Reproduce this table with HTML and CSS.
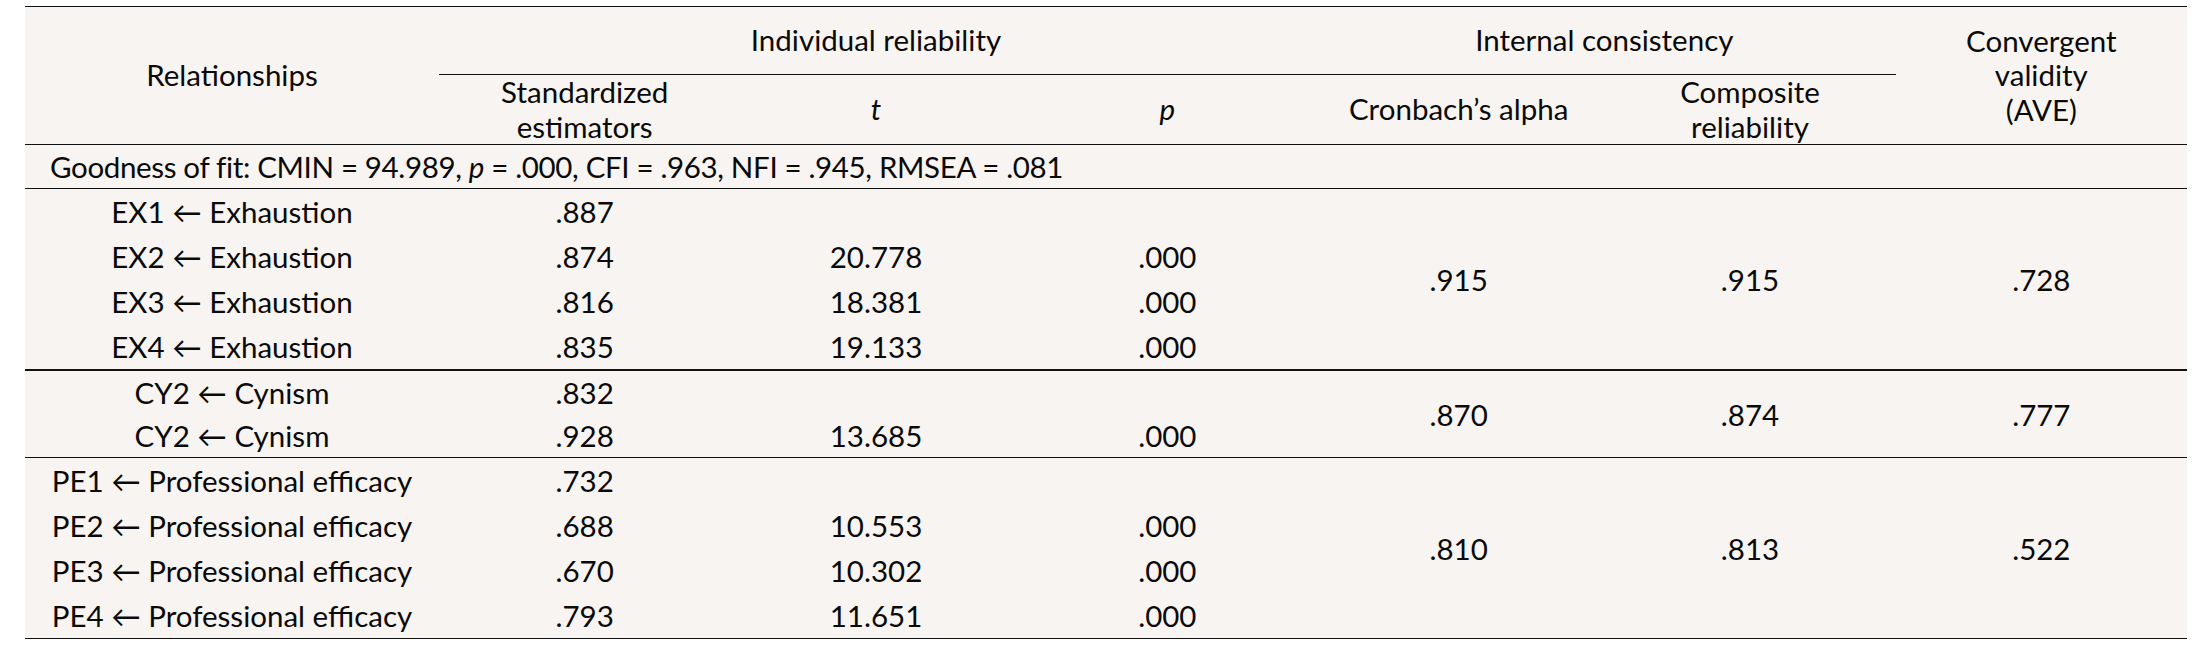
FILE: index.html
```html
<!DOCTYPE html>
<html lang="en">
<head>
<meta charset="utf-8">
<title>Reliability table</title>
<link rel="stylesheet" href="styles.css">
</head>
<body>
<table class="tbl">
  <colgroup>
    <col class="c-rel">
    <col class="c-num"><col class="c-num"><col class="c-num">
    <col class="c-num"><col class="c-num"><col class="c-num">
  </colgroup>
  <thead>
    <tr class="h1">
      <th rowspan="2" class="span2">Relationships</th>
      <th colspan="3" class="grp">Individual reliability</th>
      <th colspan="2" class="grp">Internal consistency</th>
      <th rowspan="2" class="span2">Convergent<br>validity<br>(AVE)</th>
    </tr>
    <tr class="h2">
      <th>Standardized<br>estimators</th>
      <th><i>t</i></th>
      <th><i>p</i></th>
      <th>Cronbach’s alpha</th>
      <th>Composite<br>reliability</th>
    </tr>
  </thead>
  <tbody>
    <tr class="fit">
      <td colspan="7" class="fit-cell">Goodness of fit: CMIN = 94.989, <i>p</i> = .000, CFI = .963, NFI = .945, RMSEA = .081</td>
    </tr>
  </tbody>
  <tbody class="grp-ex">
    <tr class="row">
      <td>EX1 ← Exhaustion</td><td>.887</td><td></td><td></td>
      <td rowspan="4" class="end">.915</td><td rowspan="4" class="end">.915</td><td rowspan="4" class="end">.728</td>
    </tr>
    <tr class="row"><td>EX2 ← Exhaustion</td><td>.874</td><td>20.778</td><td>.000</td></tr>
    <tr class="row"><td>EX3 ← Exhaustion</td><td>.816</td><td>18.381</td><td>.000</td></tr>
    <tr class="row last"><td>EX4 ← Exhaustion</td><td>.835</td><td>19.133</td><td>.000</td></tr>
  </tbody>
  <tbody class="grp-cy">
    <tr class="row cy">
      <td>CY2 ← Cynism</td><td>.832</td><td></td><td></td>
      <td rowspan="2" class="end">.870</td><td rowspan="2" class="end">.874</td><td rowspan="2" class="end">.777</td>
    </tr>
    <tr class="row cy last"><td>CY2 ← Cynism</td><td>.928</td><td>13.685</td><td>.000</td></tr>
  </tbody>
  <tbody class="grp-pe">
    <tr class="row">
      <td>PE1 ← Professional efficacy</td><td>.732</td><td></td><td></td>
      <td rowspan="4" class="end">.810</td><td rowspan="4" class="end">.813</td><td rowspan="4" class="end">.522</td>
    </tr>
    <tr class="row"><td>PE2 ← Professional efficacy</td><td>.688</td><td>10.553</td><td>.000</td></tr>
    <tr class="row"><td>PE3 ← Professional efficacy</td><td>.670</td><td>10.302</td><td>.000</td></tr>
    <tr class="row last"><td>PE4 ← Professional efficacy</td><td>.793</td><td>11.651</td><td>.000</td></tr>
  </tbody>
</table>
</body>
</html>
```
FILE: styles.css
```css
body {
  margin: 6px 13px 0 25px;
  background: #ffffff;
  color: #0a0a0a;
  font-family: "Lato", "Noto Sans", sans-serif;
  font-size: 29.5px;
}

.tbl {
  width: 2162px;
  border-collapse: collapse;
  table-layout: fixed;
  background: #f8f4f1;
  border-top: 1px solid #111;
}

.c-rel { width: 414px; }
.c-num { width: 291.33px; }

th, td {
  padding: 0;
  text-align: center;
  vertical-align: middle;
  white-space: nowrap;
}

th {
  font-weight: normal;
  line-height: 34.5px;
}

.h1 th { height: 67px; }
.h2 th { height: 68px; border-bottom: 1px solid #111; }
.h1 th.grp { border-bottom: 1px solid #111; }
.h1 th.span2 { border-bottom: 1px solid #111; }

.fit td { height: 43px; border-bottom: 1px solid #111; line-height: 43px; }
.fit-cell { text-align: left; padding-left: 25px; letter-spacing: -0.35px; }

.row td { height: 45px; line-height: 45px; }
.row.cy td { height: 43px; line-height: 43px; }

.grp-ex .last td, .grp-ex td.end { border-bottom: 2px solid #111; }
.grp-cy .last td, .grp-cy td.end { border-bottom: 1px solid #111; }
.grp-pe .last td, .grp-pe td.end { border-bottom: 1px solid #111; }

i { font-style: italic; }
```
